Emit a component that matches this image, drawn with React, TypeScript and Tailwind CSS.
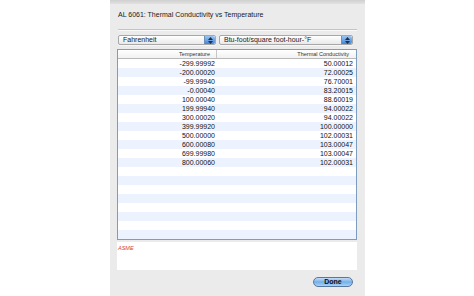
const rows: [string, string][] = [
  ['-299.99992', '50.00012'],
  ['-200.00020', '72.00025'],
  ['-99.99940', '76.70001'],
  ['-0.00040', '83.20015'],
  ['100.00040', '88.60019'],
  ['199.99940', '94.00022'],
  ['300.00020', '94.00022'],
  ['399.99920', '100.00000'],
  ['500.00000', '102.00031'],
  ['600.00080', '103.00047'],
  ['699.99980', '103.00047'],
  ['800.00060', '102.00031'],
]

function Stepper() {
  return (
    <div className="w-[11px] h-full bg-gradient-to-b from-[#9cc4f0] to-[#3f86d8] rounded-r-[2px] border-l border-[#6d8fb8] flex flex-col items-center justify-center gap-[1px]">
      <svg width="5" height="3" viewBox="0 0 5 3"><path d="M0 3 L2.5 0 L5 3 Z" fill="#1d2f4a" /></svg>
      <svg width="5" height="3" viewBox="0 0 5 3"><path d="M0 0 L2.5 3 L5 0 Z" fill="#1d2f4a" /></svg>
    </div>
  )
}

function Popup({ label, width }: { label: string; width: string }) {
  return (
    <div className={`${width} h-[10px] flex items-stretch border border-[#a8a8a8] rounded-[2px] bg-gradient-to-b from-white to-[#e9e9e9] shadow-[0_1px_0_#f7f7f7]`}>
      <span className="flex-1 pl-[4px] text-[7px] leading-[8px] text-[#222] truncate">{label}</span>
      <Stepper />
    </div>
  )
}

export default function App() {
  const blank = Array.from({ length: 20 - rows.length })
  return (
    <div className="w-[474px] h-[296px] bg-white overflow-hidden font-['Liberation_Sans',Arial,sans-serif]">
      <div className="ml-[110px] w-[255px] h-[296px] bg-[#ebebeb] flex flex-col">
        <div className="h-[4px] bg-gradient-to-b from-[#cfcfcf] to-[#e2e2e2]" />

        {/* title */}
        <div className="mt-[6px] pl-[8px] h-[9px] text-[7px] leading-[9px] text-[#1a1a1a]">
          AL 6061: Thermal Conductivity vs Temperature
        </div>

        <div className="mt-[10px] ml-[8px] w-[239px] h-px bg-[#c4c4c4] shadow-[0_1px_0_#f8f8f8]" />

        {/* unit popups */}
        <div className="mt-[5px] ml-[8px] flex gap-[3px]">
          <Popup label="Fahrenheit" width="w-[98px]" />
          <Popup label="Btu-foot/square foot-hour-°F" width="w-[134px]" />
        </div>

        {/* table */}
        <div className="mt-[4px] ml-[7px] w-[240px] border border-[#7e9cc0] bg-white">
          <div className="h-[9px] flex border-b border-[#b9b9b9] bg-gradient-to-b from-white to-[#f1f1f1] text-[5.5px] leading-[8px] text-[#333]">
            <div className="w-[99px] border-r border-[#c7c7c7] text-right pr-[6px]">Temperature</div>
            <div className="flex-1 text-right pr-[7px]">Thermal Conductivity</div>
          </div>
          {rows.map(([t, k], i) => (
            <div key={i} className={`h-[9px] flex text-[7px] leading-[9px] text-[#111] ${i % 2 ? 'bg-[#edf3fe]' : 'bg-white'}`}>
              <div className="w-[99px] text-right pr-[2px]">{t}</div>
              <div className="flex-1 text-right pr-[3px]">{k}</div>
            </div>
          ))}
          {blank.map((_, i) => (
            <div key={'b' + i} className={`h-[9px] ${(i + rows.length) % 2 ? 'bg-[#edf3fe]' : 'bg-white'}`} />
          ))}
        </div>

        {/* source note */}
        <div className="mt-[2px] ml-[7px] w-[240px] h-[28px] bg-white pl-[1px] pt-[3px]">
          <span className="block text-[5.5px] leading-[7px] italic text-[#d2403f]">ASME</span>
        </div>

        <div className="mt-[7px] flex justify-end pr-[12px]">
          <button className="w-[40px] h-[10px] rounded-full border border-[#55789f] bg-gradient-to-b from-[#c4def8] via-[#76aee9] to-[#a9d2f7] text-[7px] leading-[8px] font-bold text-[#111]">
            Done
          </button>
        </div>
      </div>
    </div>
  )
}
